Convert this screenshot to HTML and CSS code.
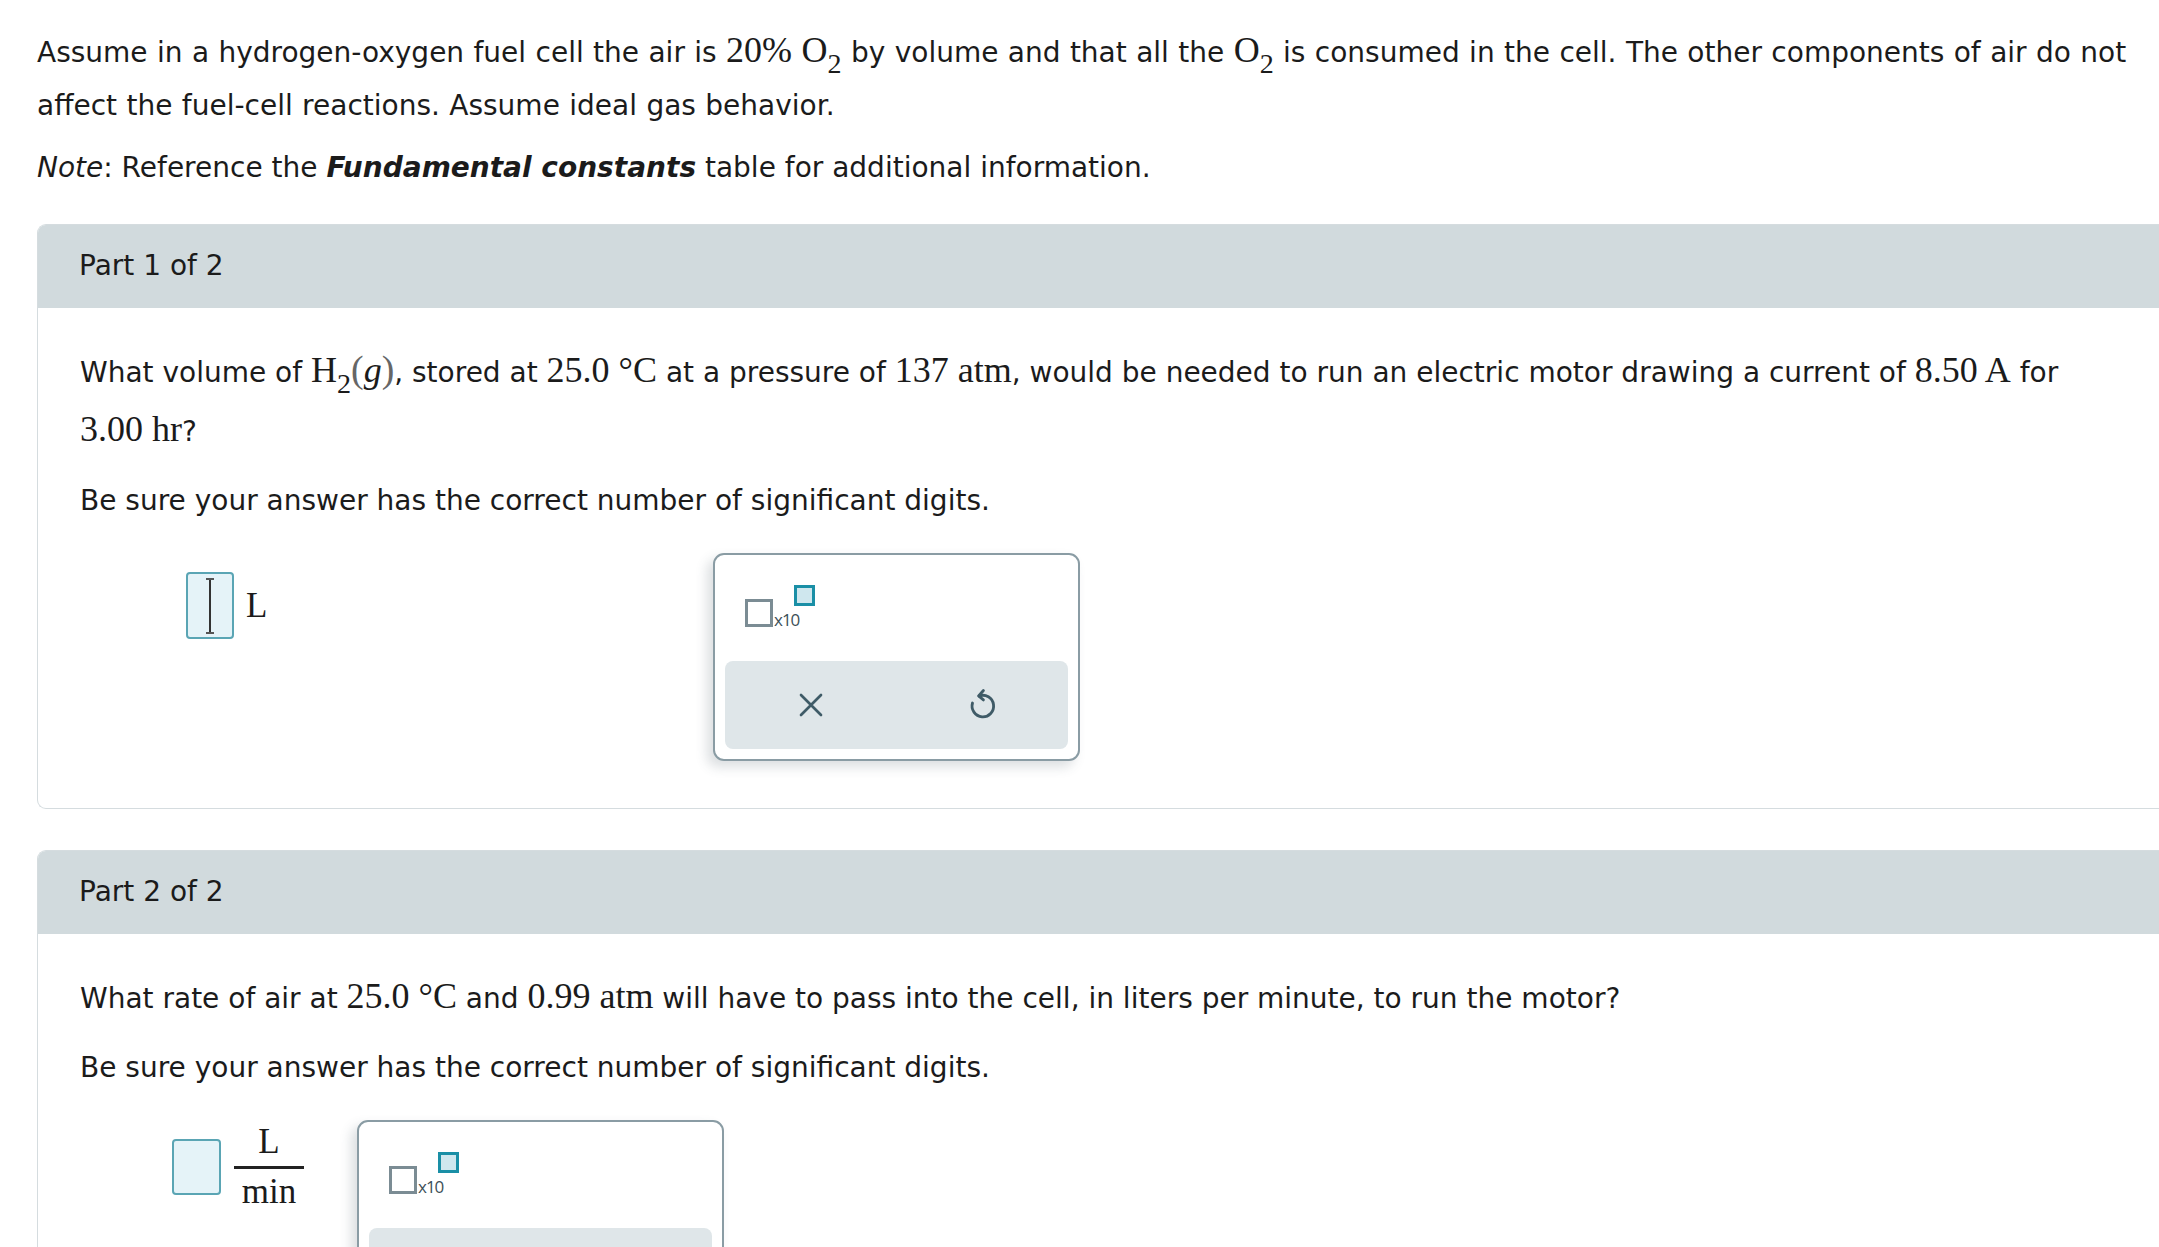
FILE: index.html
```html
<!DOCTYPE html>
<html>
<head>
<meta charset="utf-8">
<link rel="stylesheet" href="styles.css">
</head>
<body>
<div class="page">
  <p class="intro">Assume in a hydrogen-oxygen fuel cell the air is <span class="m">20%</span> <span class="m">O<sub>2</sub></span> by volume and that all the <span class="m">O<sub>2</sub></span> is consumed in the cell. The other components of air do not affect the fuel-cell reactions. Assume ideal gas behavior.</p>
  <p class="note"><i>Note</i>: Reference the <b><i>Fundamental constants</i></b> table for additional information.</p>

  <section class="panel">
    <div class="panel-head">Part 1 of 2</div>
    <div class="panel-body">
      <p class="question">What volume of <span class="m">H<sub>2</sub><span class="paren">(</span><i>g</i><span class="paren">)</span></span>, stored at <span class="m">25.0 °C</span> at a pressure of <span class="m">137 atm</span>, would be needed to run an electric motor drawing a current of <span class="m">8.50 A</span> for <span class="m">3.00 hr</span>?</p>
      <p class="sig">Be sure your answer has the correct number of significant digits.</p>
      <div class="answer-row one">
        <div class="answer">
          <div class="box active"><span class="caret"></span></div>
          <span class="unit">L</span>
        </div>
        <div class="pad">
          <div class="sci">
            <span class="sq big"></span><span class="x10">x10</span><span class="sq small"></span>
          </div>
          <div class="btnbar">
            <svg class="ico" viewBox="0 0 24 24" width="32" height="32"><path d="M4.5 4.5 L19.5 19.5 M19.5 4.5 L4.5 19.5" stroke="#3f5b67" stroke-width="2" fill="none" stroke-linecap="round"/></svg>
            <svg class="ico" viewBox="0 0 24 24" width="34" height="34"><path d="M10 5.6 A7.6 7.6 0 1 1 5.3 10.6" stroke="#3f5b67" stroke-width="2" fill="none" stroke-linecap="round"/><path d="M13 1.8 L9.6 5.6 L13 8.4" stroke="#3f5b67" stroke-width="2" fill="none" stroke-linecap="round" stroke-linejoin="round"/></svg>
          </div>
        </div>
      </div>
    </div>
  </section>

  <section class="panel two">
    <div class="panel-head">Part 2 of 2</div>
    <div class="panel-body">
      <p class="question">What rate of air at <span class="m">25.0 °C</span> and <span class="m">0.99 atm</span> will have to pass into the cell, in liters per minute, to run the motor?</p>
      <p class="sig">Be sure your answer has the correct number of significant digits.</p>
      <div class="answer-row two">
        <div class="answer">
          <div class="box tall"></div>
          <span class="frac"><span class="num">L</span><span class="den">min</span></span>
        </div>
        <div class="pad">
          <div class="sci">
            <span class="sq big"></span><span class="x10">x10</span><span class="sq small"></span>
          </div>
          <div class="btnbar"></div>
        </div>
      </div>
    </div>
  </section>
</div>
</body>
</html>
```

FILE: styles.css
```css
html, body {
  margin: 0;
  padding: 0;
  background: #fff;
  overflow: hidden;
}
body {
  width: 2159px;
  height: 1247px;
  font-family: "DejaVu Sans", Verdana, sans-serif;
  font-size: 28px;
  color: #1b1b1b;
}
.page {
  padding-left: 37px;
}
p { margin: 0; }
.intro {
  padding-top: 26px;
  line-height: 53px;
  width: 2100px;
  word-spacing: 0.5px;
}
.note {
  margin-top: 9px;
  line-height: 53px;
}
.note b i { font-weight: bold; }
.m {
  font-family: "Liberation Serif", "Times New Roman", serif;
  font-size: 36px;
  line-height: 0;
  white-space: nowrap;
  word-spacing: 0;
}
.m sub {
  font-size: 0.78em;
  vertical-align: -0.4em;
  line-height: 0;
}
.paren { color: #666; font-size: 1.05em; }
.panel {
  margin-top: 30px;
  margin-right: -40px;
  border: 1px solid #d5dcdf;
  border-right: none;
  border-radius: 9px 0 0 9px;
  overflow: hidden;
}
.panel.two { margin-top: 41px; }
.panel-head {
  height: 84px;
  background: #d1dadd;
  padding-left: 42px;
  line-height: 84px;
  margin: -1px 0 0 -1px;
}
.panel-body {
  padding: 35px 0 47px 42px;
}
.question {
  line-height: 59px;
  width: 2040px;
}
.sig {
  margin-top: 13px;
  line-height: 53px;
}
.answer-row {
  display: flex;
  align-items: flex-start;
  margin-top: 26px;
}
.answer {
  display: flex;
  align-items: center;
}
.answer-row.one .answer {
  margin-left: 106px;
  margin-top: 19px;
  width: 527px;
}
.answer-row.two .answer {
  margin-left: 92px;
  margin-top: -2px;
  width: 185px;
}
.box {
  box-sizing: border-box;
  border: 2px solid #5aa5b4;
  background: #e5f3f8;
  border-radius: 4px;
}
.box.active {
  width: 48px;
  height: 67px;
  display: flex;
  justify-content: center;
  align-items: center;
}
.caret {
  width: 2px;
  height: 56px;
  background: #333;
  position: relative;
}
.caret::before, .caret::after {
  content: "";
  position: absolute;
  left: -3px;
  width: 8px;
  height: 2px;
  background: #555;
}
.caret::before { top: 0; }
.caret::after { bottom: 0; }
.box.tall {
  width: 49px;
  height: 56px;
}
.unit {
  font-family: "Liberation Serif", "Times New Roman", serif;
  font-size: 35px;
  margin-left: 12px;
}
.frac {
  display: inline-flex;
  flex-direction: column;
  align-items: center;
  margin-left: 13px;
  font-family: "Liberation Serif", "Times New Roman", serif;
  font-size: 35px;
  line-height: 48px;
}
.frac .num {
  border-bottom: 3px solid #222;
  padding: 0 10px;
  width: 50px;
  text-align: center;
}
.frac .den { line-height: 46px; }
.pad {
  box-sizing: border-box;
  width: 367px;
  height: 208px;
  border: 2px solid #8a9ca4;
  border-radius: 11px;
  background: #fff;
  box-shadow: -6px 6px 12px rgba(60, 80, 90, 0.18);
  padding: 0 10px 10px 10px;
  display: flex;
  flex-direction: column;
  justify-content: space-between;
}
.sci {
  display: flex;
  align-items: flex-start;
  padding: 31px 0 0 20px;
  height: 40px;
}
.sq {
  box-sizing: border-box;
  display: block;
}
.sq.big {
  width: 28px;
  height: 28px;
  border: 3px solid #7b8c94;
  margin-top: 13px;
}
.x10 {
  font-family: "Open Sans", "DejaVu Sans", sans-serif;
  font-size: 17px;
  color: #3d4f57;
  margin-top: 22px;
  margin-left: 1px;
  letter-spacing: -1px;
}
.sq.small {
  width: 21px;
  height: 21px;
  border: 3px solid #1a8fa6;
  background: #cfe7ee;
  margin-left: -5px;
  margin-top: -1px;
}
.btnbar {
  height: 88px;
  background: #dfe6e9;
  border-radius: 8px;
  display: flex;
  align-items: center;
  padding-left: 70px;
  gap: 138px;
}
.ico { display: block; }
```
